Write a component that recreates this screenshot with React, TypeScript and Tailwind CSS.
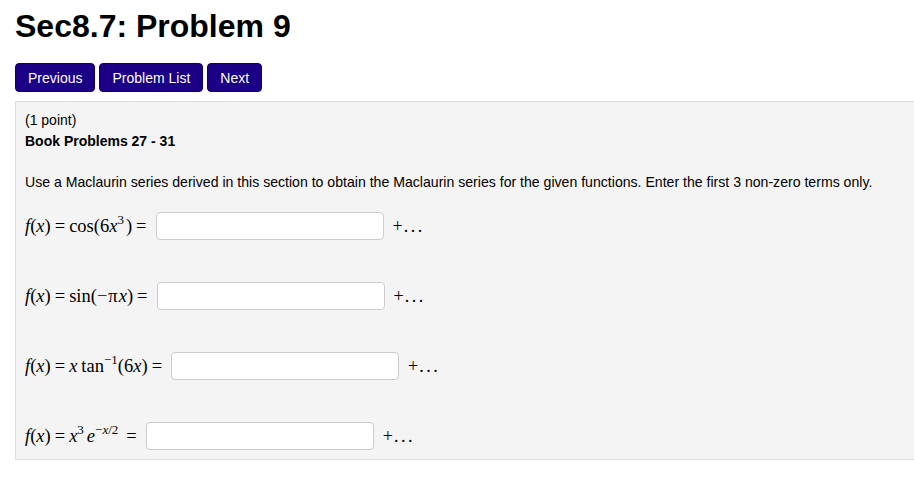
import React from 'react';

const sans = { fontFamily: '"Liberation Sans", Arial, sans-serif' };
const serif = { fontFamily: '"Liberation Serif", "Times New Roman", serif' };

const NavButton: React.FC<{ label: string }> = ({ label }) => (
  <button className="h-[29px] rounded-[4px] border border-[#120060] bg-[#1b0085] px-3 text-[14px] leading-none text-white">
    {label}
  </button>
);

const I: React.FC<{ children: React.ReactNode }> = ({ children }) => <span className="italic">{children}</span>;

const Sup: React.FC<{ children: React.ReactNode }> = ({ children }) => (
  <span className="relative -top-[8px] text-[13px] leading-none">{children}</span>
);

const Eq = () => <span className="mx-[4px]">=</span>;

const Fx = () => (
  <>
    <I>f</I>(<I>x</I>)<Eq />
  </>
);

const AnswerRow: React.FC<{ children: React.ReactNode }> = ({ children }) => (
  <div className="flex h-[28px] items-center">
    <span className="whitespace-nowrap text-[18.5px] leading-none" style={serif}>
      {children}
    </span>
    <input className="ml-[5px] h-[28px] w-[228px] rounded-[4px] border border-[#cccccc] bg-white" />
    <span className="ml-[9px] whitespace-nowrap text-[18px] leading-none" style={serif}>
      +<span className="ml-[1px] tracking-[2.5px]">...</span>
    </span>
  </div>
);

export default function App() {
  return (
    <div className="min-h-[483px] overflow-hidden bg-white pl-[15px] text-black" style={sans}>
      <h1 className="pt-[10px] text-[32px] font-bold leading-[32px]">Sec8.7: Problem 9</h1>

      <div className="mt-[21px] flex gap-[4px]">
        <NavButton label="Previous" />
        <NavButton label="Problem List" />
        <NavButton label="Next" />
      </div>

      <div className="mt-[9px] w-[920px] border border-[#dedede] bg-[#f4f4f4] pb-[9px] pl-[9px] pt-[8px]">
        <div className="text-[14px] leading-[21px]">(1 point)</div>
        <div className="text-[14px] font-bold leading-[21px]">Book Problems 27 - 31</div>

        <p className="mt-[22px] text-[14.1px] leading-[17px]">
          Use a Maclaurin series derived in this section to obtain the Maclaurin series for the given functions. Enter the
          first 3 non-zero terms only.
        </p>

        <div className="mt-[21px] flex flex-col gap-[42px]">
          <AnswerRow>
            <Fx />
            cos(6<I>x</I>
            <Sup>3</Sup>
            <span className="ml-[2px]">)</span>
            <Eq />
          </AnswerRow>
          <AnswerRow>
            <Fx />
            sin(−<span className="mx-[1px]">π</span>
            <I>x</I>)<Eq />
          </AnswerRow>
          <AnswerRow>
            <Fx />
            <I>x</I>
            <span className="ml-[4px]">tan</span>
            <Sup>−1</Sup>
            (6<I>x</I>)<Eq />
          </AnswerRow>
          <AnswerRow>
            <Fx />
            <I>x</I>
            <Sup>3</Sup>
            <span className="ml-[3px]">
              <I>e</I>
            </span>
            <Sup>
              −<I>x</I>/2
            </Sup>
            <span className="ml-[4px]">
              <Eq />
            </span>
          </AnswerRow>
        </div>
      </div>
    </div>
  );
}
